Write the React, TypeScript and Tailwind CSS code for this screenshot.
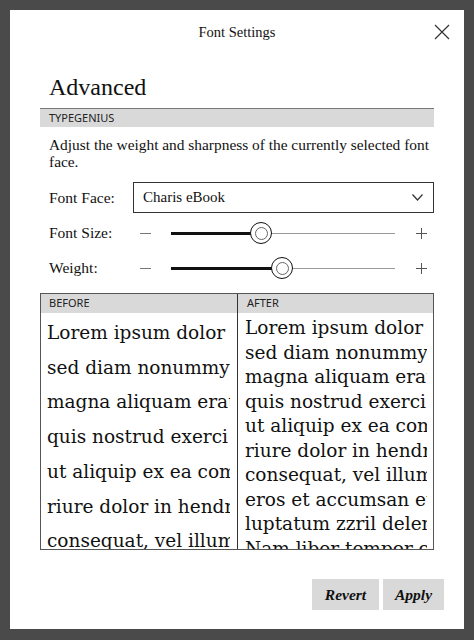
import React from 'react';

const uiFont = { fontFamily: '"Liberation Serif", "Times New Roman", serif' };

const previewLines = [
  'Lorem ipsum dolor sit amet, consectetuer adipiscing elit,',
  'sed diam nonummy nibh euismod tincidunt ut laoreet dolore',
  'magna aliquam erat volutpat. Ut wisi enim ad minim veniam,',
  'quis nostrud exerci tation ullamcorper suscipit lobortis nisl',
  'ut aliquip ex ea commodo consequat. Duis autem vel eum i',
  'riure dolor in hendrerit in vulputate velit esse molestie',
  'consequat, vel illum dolore eu feugiat nulla facilisis at vero',
  'eros et accumsan et iusto odio dignissim qui blandit praesent',
  'luptatum zzril delenit augue duis dolore te feugait nulla facilisi.',
  'Nam liber tempor cum soluta nobis eleifend option congue',
];

interface SliderRowProps {
  label: string;
  value: number; // px from track start to thumb centre
}

const SliderRow: React.FC<SliderRowProps> = ({ label, value }) => (
  <div className="flex h-[30px] items-center pl-[9px]">
    <span className="w-[84px] text-[15.5px] text-[#111]">{label}</span>
    <span className="ml-[7px] h-px w-[11px] bg-[#777]" />
    <div className="relative ml-[20px] flex h-[22px] w-[224px] items-center">
      <div className="h-[3px] bg-[#111]" style={{ width: value }} />
      <div className="h-px flex-1 bg-[#9a9a9a]" />
      <div
        className="absolute top-0 flex h-[22px] w-[22px] -translate-x-1/2 items-center justify-center rounded-full border-[1.5px] border-[#111] bg-white"
        style={{ left: value }}
      >
        <div className="h-[13px] w-[13px] rounded-full border border-[#666]" />
      </div>
    </div>
    <span className="relative ml-[21px] flex h-[11px] w-[11px] items-center justify-center">
      <span className="absolute h-px w-[11px] bg-[#555]" />
      <span className="absolute h-[11px] w-px bg-[#555]" />
    </span>
  </div>
);

interface PreviewColumnProps {
  title: string;
  before?: boolean;
  className?: string;
}

const PreviewColumn: React.FC<PreviewColumnProps> = ({ title, before, className }) => (
  <div className={`flex min-w-0 flex-col overflow-hidden ${className ?? ''}`}>
    <div
      className={`flex h-[19px] shrink-0 items-center bg-[#d9d9d9] text-[11px] text-[#222] ${before ? 'pl-[8px]' : 'pl-[9px]'}`}
      style={{ fontFamily: '"Noto Sans", "Open Sans", sans-serif' }}
    >
      {title}
    </div>
    <div
      className={`min-h-0 flex-1 overflow-hidden pt-[3px] ${before ? 'pl-[6px] pr-[7px]' : 'pl-[7px] pr-[6px]'}`}
      style={{ fontFamily: '"DejaVu Serif", serif' }}
    >
      {previewLines.map((line, i) => (
        <div
          key={i}
          className={`overflow-hidden whitespace-nowrap text-[18.5px] text-[#111] ${before ? 'leading-[34.7px]' : 'leading-[24.5px]'}`}
        >
          {line}
        </div>
      ))}
    </div>
  </div>
);

export default function App() {
  return (
    <div className="flex h-[640px] w-[474px] overflow-hidden bg-[#4a4a4a] px-[10px] pt-[10px] pb-[11px]" style={uiFont}>
      <div className="flex min-w-0 flex-1 flex-col overflow-hidden bg-white">
        <div className="relative flex h-[46px] shrink-0 items-center justify-center">
          <span className="text-[14.5px] text-[#111]">Font Settings</span>
          <button className="absolute right-[14px] top-[14px] p-0">
            <svg width="16" height="16" viewBox="0 0 16 16" fill="none" stroke="#333" strokeWidth="1.2">
              <path d="M1 1 L15 15 M15 1 L1 15" />
            </svg>
          </button>
        </div>

        <div className="px-[30px]">
          <h1 className="mt-[17px] h-[28px] pl-[9px] text-[24px] leading-[28px] text-[#111]">Advanced</h1>

          <div
            className="mt-[7px] flex h-[19px] items-center border-t border-[#7a7a7a] bg-[#d9d9d9] pl-[9px] text-[11px] text-[#222]"
            style={{ fontFamily: '"Noto Sans", "Open Sans", sans-serif' }}
          >
            TYPEGENIUS
          </div>

          <p className="mt-[9px] pl-[9px] text-[15.4px] leading-[17px] text-[#111]">
            Adjust the weight and sharpness of the currently selected font face.
          </p>

          <div className="mt-[12px] flex items-center pl-[9px]">
            <span className="w-[84px] shrink-0 text-[15.5px] text-[#111]">Font Face:</span>
            <div className="flex h-[31px] min-w-0 flex-1 items-center justify-between border-[1.5px] border-[#333] pl-[9px] pr-[10px]">
              <span className="text-[15px] text-[#111]">Charis eBook</span>
              <svg width="11" height="7" viewBox="0 0 11 7" fill="none" stroke="#333" strokeWidth="1.2">
                <path d="M0.5 0.5 L5.5 6 L10.5 0.5" />
              </svg>
            </div>
          </div>

          <div className="mt-[5px]">
            <SliderRow label="Font Size:" value={90} />
          </div>
          <div className="mt-[5px]">
            <SliderRow label="Weight:" value={111} />
          </div>

          <div className="mt-[10px] flex h-[257px] border border-[#555]">
            <PreviewColumn title="BEFORE" before className="w-[197px] shrink-0 border-r border-[#333]" />
            <PreviewColumn title="AFTER" className="flex-1" />
          </div>
        </div>

        <div className="mt-[29px] flex justify-end gap-[4px] pr-[20px]">
          <button className="h-[31px] w-[67px] bg-[#d9d9d9] text-[15.5px] font-bold italic text-[#111]">Revert</button>
          <button className="h-[31px] w-[61px] bg-[#d9d9d9] text-[15.5px] font-bold italic text-[#111]">Apply</button>
        </div>
      </div>
    </div>
  );
}
